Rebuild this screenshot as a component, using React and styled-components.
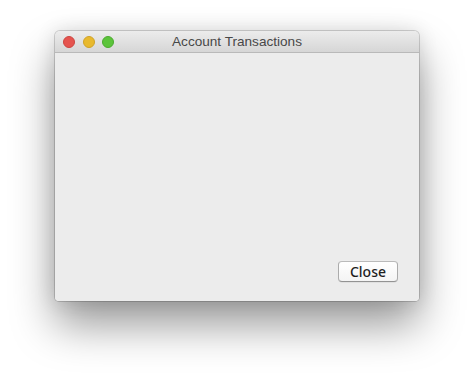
import React from "react";
import styled, { createGlobalStyle } from "styled-components";

const Global = createGlobalStyle`
  html, body { margin: 0; padding: 0; background: #ffffff; }
  body { width: 474px; height: 380px; overflow: hidden; font-family: "Liberation Sans", Arial, sans-serif; }
`;

const Stage = styled.div`
  width: 474px;
  height: 380px;
  padding: 31px 0 0 55px;
  box-sizing: border-box;
`;

const Window = styled.div`
  width: 364px;
  height: 270px;
  display: flex;
  flex-direction: column;
  border-radius: 5px 5px 4px 4px;
  background: #ececec;
  box-shadow: 0 0 0 1px rgba(0,0,0,0.16), 0 24px 44px rgba(0,0,0,0.40), 0 0 20px rgba(0,0,0,0.12);
  overflow: hidden;
`;

const TitleBar = styled.div`
  height: 22px;
  flex: none;
  display: flex;
  align-items: center;
  position: relative;
  background: linear-gradient(#ececec, #d6d6d6);
  border-bottom: 1px solid #b9b9b9;
  box-sizing: border-box;
`;

const Lights = styled.div`
  display: flex;
  gap: 7.5px;
  padding-left: 8px;
`;

const Light = styled.span`
  width: 12px;
  height: 12px;
  border-radius: 50%;
  box-sizing: border-box;
  background: ${p => p.$c};
  border: 0.5px solid ${p => p.$b};
`;

const Title = styled.div`
  position: absolute;
  left: 0;
  right: 0;
  text-align: center;
  font-size: 13.6px;
  color: #484848;
  line-height: 22px;
  pointer-events: none;
`;

const Content = styled.div`
  flex: 1;
  display: flex;
  justify-content: flex-end;
  align-items: flex-end;
  padding: 0 21px 19px 0;
  background: #ececec;
`;

const Button = styled.button`
  width: 60px;
  height: 21px;
  padding: 0;
  border-radius: 4px;
  border: 1px solid #ababab;
  border-top-color: #bababa;
  border-bottom-color: #939393;
  background: linear-gradient(#ffffff, #f4f4f4);
  font-family: "Noto Sans", "DejaVu Sans", sans-serif;
  font-weight: 500;
  font-size: 14px;
  line-height: 19px;
  color: #1e1e1e;
  box-shadow: 0 0.5px 0.5px rgba(0,0,0,0.1);
`;

export default function App() {
  return (
    <>
      <Global />
      <Stage>
        <Window>
          <TitleBar>
            <Lights>
              <Light $c="#e5544f" $b="#cc4540" />
              <Light $c="#e8b92e" $b="#cfa228" />
              <Light $c="#5cc43b" $b="#4caa30" />
            </Lights>
            <Title>Account Transactions</Title>
          </TitleBar>
          <Content>
            <Button>Close</Button>
          </Content>
        </Window>
      </Stage>
    </>
  );
}
